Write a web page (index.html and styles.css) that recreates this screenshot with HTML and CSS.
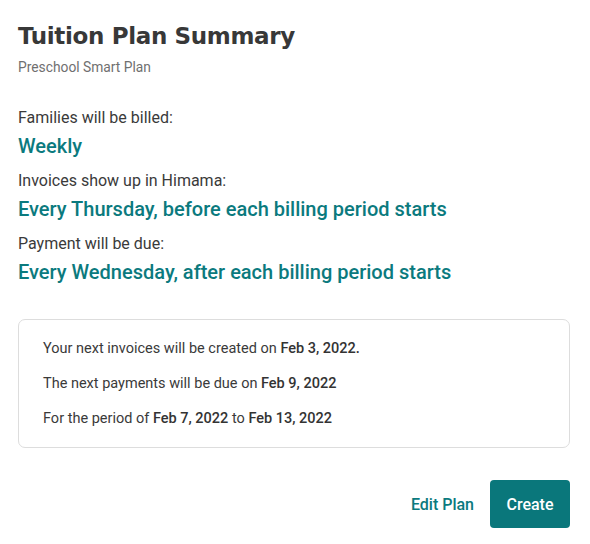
FILE: index.html
```html
<!DOCTYPE html>
<html>
<head>
<meta charset="utf-8">
<link rel="stylesheet" href="styles.css">
</head>
<body>
<div class="page">
  <h1 class="title">Tuition Plan Summary</h1>
  <div class="subtitle">Preschool Smart Plan</div>
  <div class="facts">
    <div class="fact">
      <div class="label">Families will be billed:</div>
      <div class="value">Weekly</div>
    </div>
    <div class="fact">
      <div class="label">Invoices show up in Himama:</div>
      <div class="value">Every Thursday, before each billing period starts</div>
    </div>
    <div class="fact">
      <div class="label">Payment will be due:</div>
      <div class="value">Every Wednesday, after each billing period starts</div>
    </div>
  </div>
  <div class="box">
    <p>Your next invoices will be created on <b>Feb 3, 2022.</b></p>
    <p>The next payments will be due on <b>Feb 9, 2022</b></p>
    <p>For the period of <b>Feb 7, 2022</b> to <b>Feb 13, 2022</b></p>
  </div>
  <div class="actions">
    <button class="link">Edit Plan</button>
    <button class="primary">Create</button>
  </div>
</div>
</body>
</html>
```
FILE: styles.css
```css
html, body { margin: 0; padding: 0; background: #fff; }
body { font-family: Roboto, "Liberation Sans", sans-serif; color: #333; }
.page { padding: 20px 20px 0 18px; }
.title {
  margin: 0;
  font-family: "DejaVu Sans", sans-serif;
  font-weight: bold;
  font-size: 23px;
  line-height: 32px;
  color: #383838;
  letter-spacing: -0.35px;
}
.subtitle { font-size: 13.8px; color: #707070; margin-top: 6px; line-height: 18px; }
.facts { margin-top: 32px; }
.fact { margin-bottom: 12px; }
.label { font-size: 16px; line-height: 20px; color: #3a3a3a; }
.value { font-size: 20px; line-height: 26px; font-weight: 500; color: #0b7a7e; margin-top: 5px; }
.box {
  margin-top: 34px;
  border: 1px solid #ddd;
  border-radius: 7px;
  padding: 19px 24px 18px;
}
.box p { margin: 0 0 15px; font-size: 14.5px; line-height: 20px; color: #3a3a3a; }
.box p:last-child { margin-bottom: 0; }
.box b { font-weight: 500; color: #333; }
.actions { display: flex; justify-content: flex-end; align-items: center; gap: 16px; margin-top: 32px; }
button { font-family: Roboto, sans-serif; font-size: 16px; font-weight: 500; border: 0; cursor: pointer; }
.link { background: none; color: #0b7a7e; padding: 0; }
.primary { background: #0a777b; color: #fff; border-radius: 4px; width: 80px; height: 48px; }
```
